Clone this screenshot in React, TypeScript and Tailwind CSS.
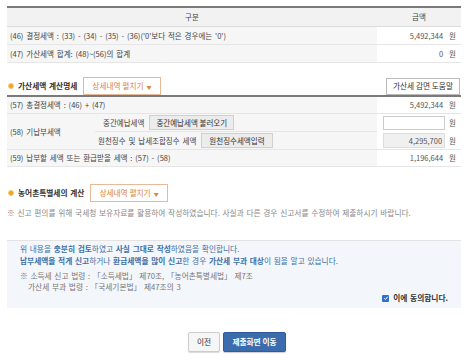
const font = { fontFamily: '"Noto Sans CJK KR", "Noto Sans", sans-serif' };

function Won({ value }: { value: string }) {
  return (
    <div className="flex items-center justify-end gap-[6px] pr-[5px] text-[#555]">
      <span>{value}</span>
      <span>원</span>
    </div>
  );
}

function Row({ label, value, tall }: { label: string; value: string; tall?: boolean }) {
  return (
    <div className={`flex border-b border-[#e6e6e6] ${tall ? "h-[18px]" : "h-[17px]"}`}>
      <div className="flex w-[370px] items-center bg-[#f6f6f6] pl-[3px] text-[#444]">{label}</div>
      <div className="flex flex-1 items-center justify-end bg-white">
        <Won value={value} />
      </div>
    </div>
  );
}

function SectionTitle({ title, right }: { title: string; right?: React.ReactNode }) {
  return (
    <div className="flex h-[18px] items-center">
      <span className="mr-[4px] ml-[1px] h-[6px] w-[6px] rounded-full border border-[#f7c56b] bg-[#f2a31b]" />
      <span className="font-bold text-[#333]">{title}</span>
      <button className="ml-[6px] flex h-[18px] items-center gap-[3px] border border-[#e8b996] bg-white px-[8px] text-[#e0803d]">
        상세내역 펼치기 <span className="text-[5px]">▼</span>
      </button>
      <div className="flex-1" />
      {right}
    </div>
  );
}

function Line({ className, children }: { className?: string; children: React.ReactNode }) {
  return <div className={`flex h-[10px] items-center whitespace-nowrap ${className ?? ""}`}>{children}</div>;
}

export default function App() {
  return (
    <div
      className="h-[362px] w-[474px] overflow-hidden bg-white text-[7.7px] leading-none [word-spacing:1px]"
      style={font}
    >
      <div className="ml-[7px] flex w-[454px] flex-col pt-[6px]">
        {/* 결정세액 표 */}
        <div className="border-t-2 border-[#7a7a7a] text-[7.5px] [word-spacing:1.2px]">
          <div className="flex h-[19px] items-center border-b border-[#dcdcdc] bg-[#f2f2f2] text-[#444]">
            <div className="w-[370px] text-center">구분</div>
            <div className="flex-1 text-center">금액</div>
          </div>
          <Row tall label="(46) 결정세액 : (33) - (34) - (35) - (36)('0'보다 적은 경우에는 '0')" value="5,492,344" />
          <Row tall label="(47) 가산세액 합계: (48)~(56)의 합계" value="0" />
        </div>

        {/* 가산세액 계산명세 */}
        <div className="mt-[14px]">
          <SectionTitle
            title="가산세액 계산명세"
            right={
              <button className="mr-[1px] h-[17px] border border-[#bbb] bg-white px-[6px] text-[#333]">가산세 감면 도움말</button>
            }
          />
          <div className="border-t-2 border-[#7a7a7a] text-[7.5px] [word-spacing:1.2px]">
            <Row label="(57) 총결정세액 : (46) + (47)" value="5,492,344" />
            <div className="flex h-[36px] border-b border-[#e6e6e6]">
              <div className="flex w-[370px] bg-[#f6f6f6] text-[#444]">
                <div className="flex w-[88px] items-center pl-[3px]">(58) 기납부세액</div>
                <div className="flex flex-1 flex-col">
                  <div className="flex h-[18px] items-center border-b border-[#e6e6e6] pl-[8px]">
                    <span>중간예납세액</span>
                    <button className="ml-[5px] h-[15px] border border-[#d0d0d0] bg-[#ececec] px-[6px] text-[#333]">중간예납세액 불러오기</button>
                  </div>
                  <div className="flex flex-1 items-center pl-[3px]">
                    <span>원천징수 및 납세조합징수 세액</span>
                    <button className="ml-[5px] h-[15px] border border-[#d0d0d0] bg-[#ececec] px-[7px] text-[#333]">원천징수세액입력</button>
                  </div>
                </div>
              </div>
              <div className="flex flex-1 flex-col bg-white text-[#555]">
                <div className="flex h-[18px] items-center justify-end gap-[4px] pr-[5px]">
                  <div className="h-[14px] w-[62px] border border-[#ccc] bg-white" />
                  <span>원</span>
                </div>
                <div className="flex flex-1 items-center justify-end gap-[4px] pr-[5px]">
                  <div className="flex h-[15px] w-[62px] items-center justify-end border border-[#ddd] bg-[#f0f0f0] pr-[2px]">4,295,700</div>
                  <span>원</span>
                </div>
              </div>
            </div>
            <Row label="(59) 납부할 세액 또는 환급받을 세액 : (57) - (58)" value="1,196,644" />
          </div>
        </div>

        {/* 농어촌특별세 */}
        <div className="mt-[17px]">
          <SectionTitle title="농어촌특별세의 계산" />
        </div>
        <Line className="mt-[6px] text-[#888]">※ 신고 편의를 위해 국세청 보유자료를 활용하여 작성하였습니다. 사실과 다른 경우 신고서를 수정하여 제출하시기 바랍니다.</Line>

        <div className="mt-[22px] flex h-[68px] flex-col border-t border-[#e3e3e3] bg-[#f3f6fa] px-[13px] pt-[3px]">
          <Line className="text-[#3d6fa6]">
            <span>
              위 내용을 <b>충분히 검토</b>하였고 <b>사실 그대로 작성</b>하였음을 확인합니다.
            </span>
          </Line>
          <Line className="mt-[2px] text-[#3d6fa6]">
            <span>
              <b>납부세액을 적게 신고</b>하거나 <b>환급세액을 많이 신고</b>한 경우 <b>가산세 부과 대상</b>이 됨을 알고 있습니다.
            </span>
          </Line>
          <Line className="mt-[5px] text-[#777]">※ 소득세 신고 법령 : 「소득세법」 제70조, 「농어촌특별세법」 제7조</Line>
          <Line className="mt-[1px] pl-[8px] text-[#777]">가산세 부과 법령 : 「국세기본법」 제47조의 3</Line>
          <Line className="mt-[1px] justify-end gap-[4px] font-bold text-[#333]">
            <span className="flex h-[7px] w-[7px] items-center justify-center rounded-[1px] bg-[#2f6fd0]">
              <svg viewBox="0 0 10 10" className="h-[6px] w-[6px]">
                <path d="M2 5.2 L4.2 7.4 L8 2.8" fill="none" stroke="white" strokeWidth="1.6" />
              </svg>
            </span>
            <span>이에 동의합니다.</span>
          </Line>
        </div>

        <div className="mt-[24px] flex justify-center gap-[3px] pl-[6px]">
          <button className="h-[20px] w-[32px] rounded-[2px] border border-[#ccc] bg-[#f6f6f6] text-[#333] shadow-[0_1px_1px_rgba(0,0,0,0.15)]">이전</button>
          <button className="h-[20px] w-[63px] rounded-[2px] border border-[#2f5d99] bg-[#3b6cad] font-bold text-white shadow-[0_1px_1px_rgba(0,0,0,0.2)]">제출화면 이동</button>
        </div>
      </div>
    </div>
  );
}
